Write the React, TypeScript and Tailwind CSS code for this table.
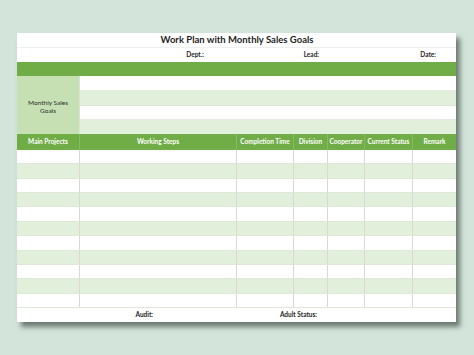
const cols = [
  { label: 'Main Projects', w: 'w-[63px]' },
  { label: 'Working Steps', w: 'w-[157px]' },
  { label: 'Completion Time', w: 'w-[57px]' },
  { label: 'Division', w: 'w-[34px]' },
  { label: 'Cooperator', w: 'w-[37px]' },
  { label: 'Current Status', w: 'w-[48px]' },
  { label: 'Remark', w: 'flex-1' },
];

const font = { fontFamily: 'Lato, "Open Sans", sans-serif' };

export default function App() {
  const rows = Array.from({ length: 11 }, (_, i) => i);

  return (
    <div className="w-[474px] h-[355px] bg-[#d3e5da] pt-[33px] pl-[17px]" style={font}>
      <div className="w-[439px] bg-white shadow-[4px_5px_5px_rgba(40,50,45,0.6)] text-[#1e1e1e]">
        {/* Title */}
        <div className="h-[15px] flex items-center justify-center border-b border-[#eef0ee] text-[9.5px] font-bold leading-none pl-[1px]">
          Work Plan with Monthly Sales Goals
        </div>

        {/* Dept / Lead / Date */}
        <div className="h-[14px] flex items-center text-[6.5px] font-bold leading-none">
          <span className="w-[187px] text-right">Dept.:</span>
          <span className="w-[115px] text-right">Lead:</span>
          <span className="w-[117px] text-right">Date:</span>
        </div>

        {/* Green bar */}
        <div className="h-[14px] bg-[#70ad47]" />

        {/* Monthly sales goals */}
        <div className="flex h-[58px]">
          <div className="w-[63px] bg-[#c6e0b4] flex items-center justify-center text-center text-[6.5px] leading-[8px] px-2 pt-[3px] text-[#2a2a2a] border-r border-[#d8e6cf]">
            Monthly Sales Goals
          </div>
          <div className="flex-1 flex flex-col">
            <div className="flex-1 bg-white border-b border-[#e4ebe0]" />
            <div className="flex-1 bg-[#e2efda] border-b border-[#d9e6d1]" />
            <div className="flex-1 bg-white border-b border-[#e4ebe0]" />
            <div className="flex-1 bg-[#e2efda]" />
          </div>
        </div>

        {/* Header */}
        <div className="flex h-[16px] bg-[#70ad47] text-white text-[6.5px] font-bold leading-none">
          {cols.map((c) => (
            <div key={c.label} className={`${c.w} flex items-center justify-center border-r border-[#86bb63] last:border-r-0 whitespace-nowrap`}>
              {c.label}
            </div>
          ))}
        </div>

        {/* Data rows */}
        {rows.map((r) => (
          <div key={r} className={`flex h-[14.36px] border-b border-[#dfe6da] ${r % 2 === 1 ? 'bg-[#e2efda]' : 'bg-white'}`}>
            {cols.map((c) => (
              <div key={c.label} className={`${c.w} border-r border-[#d6d9d4] last:border-r-0`} />
            ))}
          </div>
        ))}

        {/* Footer */}
        <div className="h-[14px] flex items-center text-[6.5px] font-bold leading-none">
          <span className="w-[136px] text-right">Audit:</span>
          <span className="w-[164px] text-right">Adult Status:</span>
        </div>
      </div>
    </div>
  );
}
